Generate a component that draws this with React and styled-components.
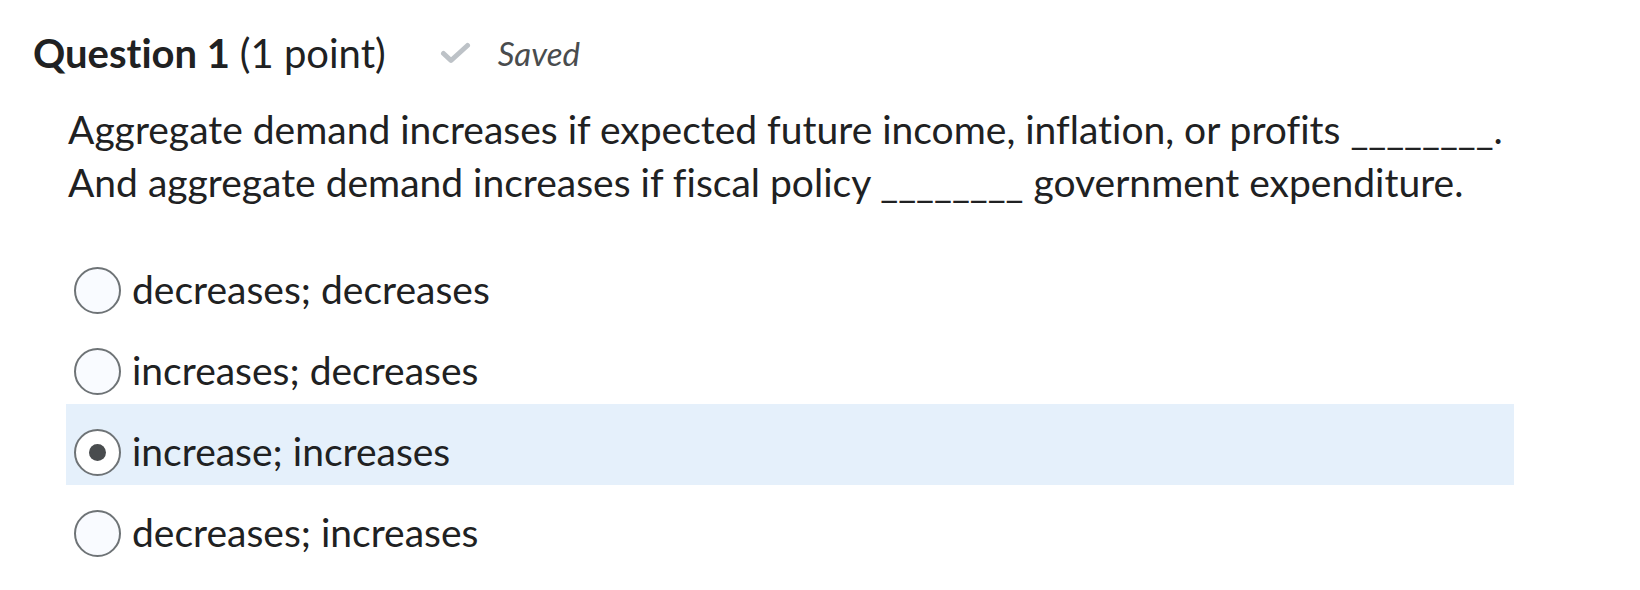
import React from 'react';
import styled, { createGlobalStyle } from 'styled-components';

const GlobalStyle = createGlobalStyle`
  body {
    margin: 0;
    background: #ffffff;
    font-family: Lato, "Noto Sans", sans-serif;
    font-variant-ligatures: none;
    color: #202122;
  }
`;

const Page = styled.div`
  padding: 29px 0 0 33px;
`;

const Header = styled.div`
  display: flex;
  align-items: center;
`;

const Title = styled.h2`
  margin: 0;
  font-size: 40px;
  font-weight: 700;
  line-height: 48px;
  color: #202122;
`;

const Points = styled.span`
  font-weight: 400;
`;

const SavedStatus = styled.div`
  display: flex;
  align-items: center;
  margin-left: 54px;
  gap: 27px;
  font-size: 33px;
  font-style: italic;
  color: #494c4e;
`;

const Body = styled.div`
  padding-left: 33px;
  width: 1448px;
`;

const Prompt = styled.p`
  margin: 26px 0 0 2px;
  font-size: 39px;
  line-height: 53px;
`;

const Options = styled.div`
  margin-top: 33px;
  display: flex;
  flex-direction: column;
`;

const Option = styled.label`
  display: flex;
  align-items: center;
  box-sizing: border-box;
  height: 81px;
  padding: 16px 0 0 8px;
  gap: 11px;
  font-size: 39px;
  background: ${p => (p.$selected ? '#e5f0fb' : 'transparent')};
`;

const OptionText = styled.span`
  padding-bottom: 4px;
`;

const Radio = styled.span`
  box-sizing: border-box;
  width: 47px;
  height: 47px;
  border-radius: 50%;
  border: 2px solid #6e7376;
  background: ${p => (p.$checked ? '#ffffff' : '#f9fbff')};
  display: flex;
  align-items: center;
  justify-content: center;
  flex-shrink: 0;

  &::after {
    content: '';
    display: ${p => (p.$checked ? 'block' : 'none')};
    width: 17px;
    height: 17px;
    border-radius: 50%;
    background: #494c4e;
  }
`;

const CheckIcon = () => (
  <svg width="31" height="22" viewBox="0 0 31 22" fill="none">
    <path d="M3.5 11.5 L11 18.5 L27.5 3.5" stroke="#bdc2c7" strokeWidth="5" strokeLinecap="round" strokeLinejoin="round" />
  </svg>
);

const options = [
  'decreases; decreases',
  'increases; decreases',
  'increase; increases',
  'decreases; increases',
];

const App = () => (
  <>
    <GlobalStyle />
    <Page>
      <Header>
        <Title>
          Question 1 <Points>(1 point)</Points>
        </Title>
        <SavedStatus>
          <CheckIcon />
          <span>Saved</span>
        </SavedStatus>
      </Header>
      <Body>
        <Prompt>
          Aggregate demand increases if expected future income, inflation, or profits ________.
          <br />
          And aggregate demand increases if fiscal policy ________ government expenditure.
        </Prompt>
        <Options>
          {options.map((text, i) => (
            <Option key={text} $selected={i === 2}>
              <Radio $checked={i === 2} />
              <OptionText>{text}</OptionText>
            </Option>
          ))}
        </Options>
      </Body>
    </Page>
  </>
);

export default App;
